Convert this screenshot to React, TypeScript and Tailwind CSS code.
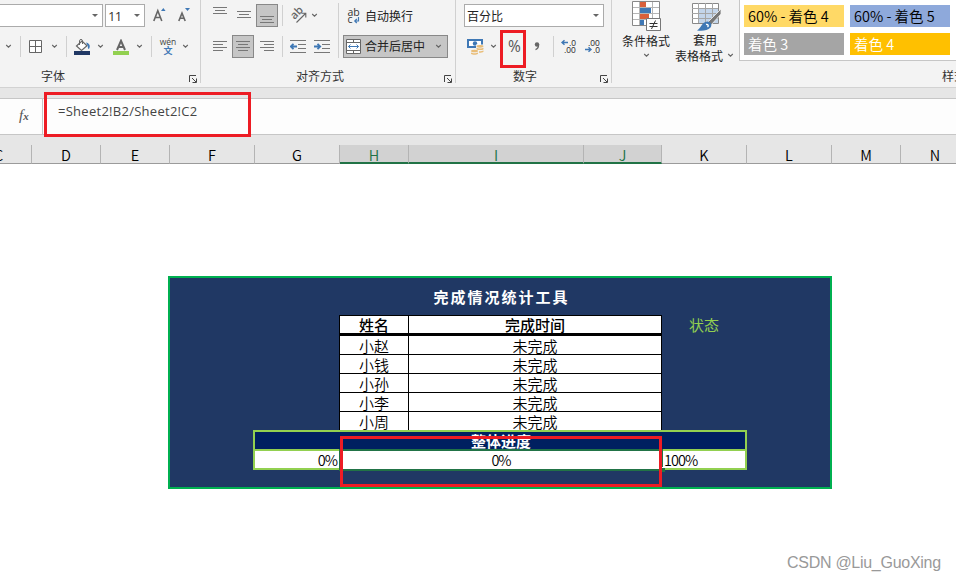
import type { ReactNode } from "react";

const Chevron = ({ className = "" }: { className?: string }) => (
  <svg className={`h-[5px] w-[7px] shrink-0 ${className}`} viewBox="0 0 7 5">
    <path d="M1.2 1L3.5 3.2L5.8 1" fill="none" stroke="#666" strokeWidth="1.1" />
  </svg>
);

const Triangle = ({ className = "" }: { className?: string }) => (
  <svg className={`h-[3px] w-[6px] shrink-0 ${className}`} viewBox="0 0 6 3">
    <path d="M0 0H6L3 3Z" fill="#666" />
  </svg>
);

const Sep = ({ className = "" }: { className?: string }) => (
  <div className={`w-px shrink-0 bg-[#d0d0d0] ${className}`} />
);

const Launcher = ({ className = "" }: { className?: string }) => (
  <svg className={`h-[8px] w-[8px] shrink-0 ${className}`} viewBox="0 0 8 8" fill="none" stroke="#444">
    <path d="M0.5 7V0.5H7M3 3L7 7M7.5 3.5V7.5H3.5" />
  </svg>
);

type Line = [number, number, number];
const Lines = ({ lines, className = "" }: { lines: Line[]; className?: string }) => (
  <svg className={`h-[21px] w-[20px] shrink-0 ${className}`} viewBox="0 0 20 21" stroke="#777" shapeRendering="crispEdges">
    {lines.map(([x1, x2, y]) => (
      <path key={y} d={`M${x1} ${y}.5H${x2}`} />
    ))}
  </svg>
);

const GroupLabel = ({ children, pad, launcher }: { children: ReactNode; pad: string; launcher: string }) => (
  <div className={`flex h-[25px] ${pad}`}>
    <span className="mt-[9px] whitespace-nowrap text-[12px] leading-[18px] text-[#333]">{children}</span>
    <Launcher className={`mt-[17px] ml-auto ${launcher}`} />
  </div>
);

const Indent = ({ right }: { right?: boolean }) => (
  <svg className="h-[14px] w-[16px] shrink-0" viewBox="0 0 16 14" fill="none">
    <path d="M0 0.5H16M8 4.5H16M8 8.5H16M0 12.5H16" stroke="#777" shapeRendering="crispEdges" />
    <path d={right ? "M0 6.5H6M3.5 3.8L6.2 6.5L3.5 9.2" : "M7 6.5H1M3.5 3.8L0.8 6.5L3.5 9.2"} stroke="#3f78b5" strokeWidth="1.8" />
  </svg>
);

const FontGroup = () => (
  <div className="flex w-[200px] shrink-0 flex-col">
    <div className="mt-[4px] flex h-[23px] shrink-0">
      <div className="flex w-[103px] items-center justify-end border border-l-0 border-[#ababab] bg-white pr-[4px]">
        <Triangle />
      </div>
      <div className="ml-[2px] flex w-[40px] items-center justify-between border border-[#ababab] bg-white pr-[4px] pl-[2px]">
        <span className="text-[13px] leading-[20px] tracking-[-0.8px] text-[#333] font-['Open_Sans',sans-serif]">11</span>
        <Triangle />
      </div>
      <svg className="mt-[3px] ml-[8px] h-[18px] w-[14px]" viewBox="0 0 14 18">
        <path d="M0.8 14L4.8 3.8L8.8 14M2.3 10.5H7.3" fill="none" stroke="#666" strokeWidth="1.6" />
        <path d="M8 4L10.3 1L12.6 4Z" fill="#3f78b5" />
      </svg>
      <svg className="mt-[3px] ml-[11px] h-[18px] w-[13px]" viewBox="0 0 13 18">
        <path d="M0.8 14L4 6.2L7.2 14M2 11.3H6" fill="none" stroke="#666" strokeWidth="1.6" />
        <path d="M7 1H12L9.5 4Z" fill="#3f78b5" />
      </svg>
    </div>
    <div className="mt-[8px] flex h-[23px] shrink-0 items-center pl-[5px]">
      <Chevron />
      <Sep className="ml-[8px] h-[21px]" />
      <svg className="ml-[8px] h-[13px] w-[13px]" viewBox="0 0 13 13">
        <path d="M0.5 0.5H12.5V12.5H0.5ZM6.5 0V13M0 6.5H13" fill="#fff" stroke="#666" />
      </svg>
      <Chevron className="ml-[9px]" />
      <Sep className="ml-[8px] h-[21px]" />
      <svg className="ml-[7px] h-[16px] w-[16px]" viewBox="0 0 16 16">
        <path d="M2.5 7L8 2L13 6.8L7.5 11.5Z" fill="#fff" stroke="#666" strokeWidth="1.2" />
        <path d="M5.5 6V1.8C5.5 0 8.5 0 8.5 1.8V5" fill="none" stroke="#666" />
        <path d="M12 3.5C16 4.5 16.5 7 15 10C14 10 13.8 9 13.8 7Z" fill="#3f78b5" />
        <path d="M0 12H16V16H0Z" fill="#203864" />
      </svg>
      <Chevron className="ml-[7px]" />
      <svg className="ml-[9px] h-[16px] w-[16px]" viewBox="0 0 16 16">
        <path d="M4 11L8 1.8L12 11M5.4 8H10.6" fill="none" stroke="#666" strokeWidth="2" />
        <path d="M0 12H16V16H0Z" fill="#92d050" />
      </svg>
      <Chevron className="ml-[7px]" />
      <Sep className="ml-[8px] h-[21px]" />
      <div className="-mt-px ml-[7px] flex w-[18px] flex-col items-center">
        <span className="text-[8.5px] leading-[8px] text-[#444] font-['Open_Sans',sans-serif]">wén</span>
        <span className="text-[9px] font-bold leading-[9px] text-[#3f78b5]">文</span>
      </div>
      <Chevron className="ml-[5px]" />
    </div>
    <GroupLabel pad="pl-[41px]" launcher="mr-[3px]">字体</GroupLabel>
  </div>
);

const AlignGroup = () => (
  <div className="flex w-[254px] shrink-0 flex-col">
    <div className="flex h-[58px] shrink-0">
      <div className="w-[137px] pl-[8px]">
        <div className="mt-[4px] flex h-[23px] items-center">
          <Lines className="ml-px" lines={[[3, 17, 2], [5, 15, 5], [3, 17, 8]]} />
          <Lines className="ml-[4px]" lines={[[3, 17, 6], [5, 15, 9], [3, 17, 12]]} />
          <div className="ml-[2px] flex h-[23px] w-[22px] items-center justify-center border border-[#888] bg-[#c6c6c6]">
            <Lines lines={[[3, 17, 11], [5, 15, 14], [3, 17, 17]]} />
          </div>
          <Sep className="ml-[4px] h-[21px]" />
          <svg className="ml-[7px] h-[17px] w-[17px] overflow-visible" viewBox="0 0 17 17">
            <text x="0" y="0" fontSize="11" fontWeight="600" fill="#666" fontFamily="Open Sans" transform="translate(4.5 13) rotate(-45)">ab</text>
            <path d="M6.5 15.5L15.5 6.5M11.5 6.2H15.8V10.5" fill="none" stroke="#666" strokeWidth="1.1" />
          </svg>
          <Chevron className="ml-[4px]" />
        </div>
        <div className="mt-[8px] flex h-[23px] items-center">
          <Lines className="ml-px" lines={[[3, 17, 5], [3, 13, 8], [3, 17, 11], [3, 13, 14]]} />
          <div className="ml-[2px] flex h-[23px] w-[22px] items-center justify-center border border-[#888] bg-[#c6c6c6]">
            <Lines lines={[[3, 17, 5], [5, 15, 8], [3, 17, 11], [5, 15, 14]]} />
          </div>
          <Lines className="ml-[2px]" lines={[[4, 18, 5], [8, 18, 8], [4, 18, 11], [8, 18, 14]]} />
          <Sep className="ml-[6px] h-[21px]" />
          <div className="ml-[7px] flex gap-[8px]">
            <Indent />
            <Indent right />
          </div>
        </div>
      </div>
      <Sep className="mt-[3px] h-[55px]" />
      <div className="pl-[4px]">
        <div className="mt-[4px] flex h-[23px] items-center pl-[4px]">
          <svg className="h-[18px] w-[14px] overflow-visible" viewBox="0 0 14 18">
            <text x="0.5" y="8.5" fontSize="10.5" fill="#333" fontFamily="Open Sans">ab</text>
            <text x="0.5" y="16" fontSize="10.5" fill="#333" fontFamily="Open Sans">c</text>
            <path d="M11.5 10V14H8M9.8 12L7.8 14L9.8 16" fill="none" stroke="#3f78b5" strokeWidth="1.2" />
          </svg>
          <span className="ml-[4px] whitespace-nowrap text-[12px] leading-[18px] text-[#222]">自动换行</span>
        </div>
        <div className="mt-[8px] flex h-[23px] w-[105px] items-center border border-[#888] bg-[#c6c6c6] pl-[2px]">
          <svg className="h-[15px] w-[15px]" viewBox="0 0 15 15">
            <path d="M0.5 0.5H14.5V14.5H0.5ZM0.5 3.5H14.5M0.5 11.5H14.5M7.5 0.5V3.5M7.5 11.5V14.5" fill="#fff" stroke="#666" />
            <path d="M2.5 7.5H12.5M4.5 5.5L2.5 7.5L4.5 9.5M10.5 5.5L12.5 7.5L10.5 9.5" fill="none" stroke="#3f78b5" />
          </svg>
          <span className="-mt-px ml-[4px] whitespace-nowrap text-[12px] leading-[18px] text-[#222]">合并后居中</span>
          <Chevron className="ml-[10px]" />
        </div>
      </div>
    </div>
    <GroupLabel pad="pl-[95px]" launcher="mr-[3px]">对齐方式</GroupLabel>
  </div>
);

const NumberGroup = () => (
  <div className="flex w-[155px] shrink-0 flex-col">
    <div className="mt-[4px] ml-[8px] flex h-[23px] w-[140px] shrink-0 items-center justify-between border border-[#ababab] bg-white pr-[4px] pl-[2px]">
      <span className="text-[12px] leading-[18px] text-[#222]">百分比</span>
      <Triangle />
    </div>
    <div className="mt-[8px] flex h-[23px] shrink-0 items-center pl-[11px]">
      <svg className="h-[16px] w-[17px]" viewBox="0 0 17 16">
        <path d="M0 0H16V9H0Z" fill="#3f78b5" />
        <path d="M2 2H14V7H2Z" fill="#fff" />
        <circle cx="8" cy="4.5" r="2.2" fill="#3f78b5" />
        <path d="M9 5.5H17V14H11.5V16H3.5V10.5H9Z" fill="#f3f3f3" />
        <g fill="#e9bd78">
          <ellipse cx="13" cy="7.3" rx="3.5" ry="1.4" />
          <path d="M9.5 8.8C11 9.8 15 9.8 16.5 8.8V10.2C15 11.4 11 11.4 9.5 10.2Z" />
          <path d="M12 12.2C13.5 12.4 15.5 12 16.5 11.4V12.7C15.5 13.6 13.5 13.9 12 13.8Z" />
          <ellipse cx="7.5" cy="12" rx="3.5" ry="1.3" />
          <path d="M4 13.6C5.5 14.5 9.5 14.5 11 13.6V14.8C9.5 16.1 5.5 16.1 4 14.8Z" />
        </g>
      </svg>
      <Chevron className="ml-[6px]" />
      <span className="-mt-px ml-[10px] w-[15px] text-center text-[15.5px] leading-[20px] text-[#555] font-['Open_Sans',sans-serif]">%</span>
      <svg className="ml-[12px] h-[9px] w-[7px]" viewBox="0 0 7 9">
        <circle cx="3" cy="2.5" r="2.2" fill="#666" />
        <path d="M4.4 2.2C4.8 5 3.5 7 1.5 7.7" fill="none" stroke="#666" strokeWidth="1.4" />
      </svg>
      <Sep className="ml-[12px] h-[21px]" />
      <svg className="ml-[7px] h-[16px] w-[16px] overflow-visible" viewBox="0 0 16 16">
        <text x="8" y="7" fontSize="8.5" fill="#333" fontFamily="Liberation Sans">.0</text>
        <text x="3" y="14" fontSize="8.5" fill="#333" fontFamily="Liberation Sans">.00</text>
        <path d="M7 3.5H1M3.5 1.2L1 3.5L3.5 5.8" fill="none" stroke="#3f78b5" strokeWidth="1.4" />
      </svg>
      <svg className="ml-[8px] h-[16px] w-[16px] overflow-visible" viewBox="0 0 16 16">
        <text x="3" y="7" fontSize="8.5" fill="#333" fontFamily="Liberation Sans">.00</text>
        <text x="8" y="14" fontSize="8.5" fill="#333" fontFamily="Liberation Sans">.0</text>
        <path d="M0 10.5H6M3.5 8.2L6 10.5L3.5 12.8" fill="none" stroke="#3f78b5" strokeWidth="1.4" />
      </svg>
    </div>
    <GroupLabel pad="pl-[57px]" launcher="mr-[3px]">数字</GroupLabel>
  </div>
);

const STYLE_CELLS = [
  { label: "60% - 着色 4", cls: "bg-[#ffd966] text-black" },
  { label: "60% - 着色 5", cls: "bg-[#8ea9db] text-black" },
  { label: "着色 3", cls: "bg-[#a5a5a5] text-white" },
  { label: "着色 4", cls: "bg-[#ffc000] text-white" },
];

const StylesGroup = () => (
  <div className="flex min-w-0 flex-1 overflow-hidden">
    <div className="flex w-[63px] flex-col items-center pl-[5px]">
      <svg className="mt-px h-[31px] w-[30px] shrink-0" viewBox="0 0 30 31">
        <path d="M1.5 0.5H28.5V24.5H1.5Z" fill="#fff" />
        <path d="M8.5 0V25M21.5 0V25M1 6.5H29M1 12.5H29M1 18.5H29" stroke="#b5b5b5" />
        <path d="M1.5 0.5H28.5V24.5H1.5Z" fill="none" stroke="#888" />
        <path d="M9 1H15V6H9ZM9 13H18V18H9Z" fill="#d9603b" />
        <path d="M9 7H20V12H9ZM9 19H13V24H9Z" fill="#3f78b5" />
        <path d="M15.5 17.5H29.5V29.5H15.5Z" fill="#fff" stroke="#777" />
        <path d="M18.5 22.5H26.5M18.5 25.5H26.5M24.5 19.5L20.5 28" stroke="#333" fill="none" />
      </svg>
      <span className="whitespace-nowrap text-[12px] leading-[17px] text-[#222]">条件格式</span>
      <Chevron className="mt-[4px]" />
    </div>
    <div className="w-[64px] shrink-0">
      <svg className="mt-[3px] ml-[17px] h-[29px] w-[30px]" viewBox="0 0 30 29">
        <path d="M0.5 0.5H26.5V20.5H0.5Z" fill="#fff" stroke="#888" />
        <path d="M7 5H26V20H7Z" fill="#c3d5ea" />
        <path d="M6.5 0V20M13.5 0V20M20.5 0V20M0 5.5H26M0 10.5H26M0 15.5H26" stroke="#a5a5a5" />
        <path d="M29 6V11L19 22L16 19Z" fill="#777" stroke="#f3f3f3" strokeWidth="0.8" />
        <path d="M15.5 18.5C19 19 20.5 21.5 18.5 24.5C15.5 28 10 28 5 27.5C9 25.5 9.5 19 15.5 18.5Z" fill="#3f78b5" />
        <path d="M14 21.5C16 21 17 23 15.5 24" fill="none" stroke="#fff" strokeWidth="1.4" />
      </svg>
      <div className="flex flex-col text-[12px] leading-[15px] text-[#222]">
        <span className="pl-[18px]">套用</span>
        <span className="mt-px flex items-center whitespace-nowrap">
          表格格式
          <Chevron className="ml-[4px]" />
        </span>
      </div>
    </div>
    <div className="min-w-0 flex-1">
      <div className="h-[61px] border-b border-l border-[#c6c6c6] bg-white pt-[5px] pl-[4px]">
        <div className="grid grid-cols-[100px_100px] gap-[6px]">
          {STYLE_CELLS.map((c) => (
            <div key={c.label} className={`h-[22px] pl-[4px] text-[14.5px] font-[350] leading-[21px] whitespace-nowrap ${c.cls}`}>
              {c.label}
            </div>
          ))}
        </div>
      </div>
      <div className="mt-[6px] ml-[203px] w-[30px] text-[12px] leading-[18px] text-[#333]">样式</div>
    </div>
  </div>
);

const COLUMNS = [
  { n: "C", w: "w-[32px]" },
  { n: "D", w: "w-[69px]" },
  { n: "E", w: "w-[69px]" },
  { n: "F", w: "w-[85px]" },
  { n: "G", w: "w-[85px]" },
  { n: "H", w: "w-[69px]", on: true },
  { n: "I", w: "w-[175px]", on: true },
  { n: "J", w: "w-[78px]", on: true },
  { n: "K", w: "w-[85px]" },
  { n: "L", w: "w-[85px]" },
  { n: "M", w: "w-[69px]" },
  { n: "N", w: "w-[69px]" },
];

const ColumnHeader = () => (
  <div className="flex h-[29px] items-end overflow-hidden bg-[#e6e6e6]">
    {COLUMNS.map((c) => (
      <div
        key={c.n}
        className={`flex h-[19px] shrink-0 justify-center border-r border-r-[#b4b4b4] text-[14.5px] font-[350] leading-[20px] ${c.w} ${
          c.on ? "border-b-2 border-b-[#217346] bg-[#d2d2d2] text-[#217346]" : "border-b border-b-[#9b9b9b] text-black"
        }`}
      >
        <span className={c.n === "C" ? "-ml-[34px]" : ""}>{c.n}</span>
      </div>
    ))}
  </div>
);

const NAMES = ["小赵", "小钱", "小孙", "小李", "小周"];

const Sheet = () => (
  <div className="flex-1 bg-white pt-[112px] pl-[168px]">
    <div className="flex h-[213px] w-[664px] flex-col border-2 border-[#00b050] bg-[#203864] text-[15px] text-black">
      <div className="h-[37px] shrink-0 pl-[3px] text-center text-[15px] font-bold leading-[37px] tracking-[2px] text-white">
        完成情况统计工具
      </div>
      <div className="flex h-[115px] shrink-0">
        <div className="ml-[169px] w-[323px] border-x border-t border-black bg-white text-center">
          <div className="flex h-[20px] border-b-3 border-black font-medium leading-[17px]">
            <span className="w-[69px] border-r border-black">姓名</span>
            <span className="flex-1">完成时间</span>
          </div>
          {NAMES.map((n) => (
            <div key={n} className="flex h-[19px] border-b border-black font-[350] leading-[19px]">
              <span className="w-[69px] border-r border-black">{n}</span>
              <span className="flex-1">未完成</span>
            </div>
          ))}
        </div>
        <div className="w-[85px] pr-px text-center leading-[19px] text-[#92d050]">状态</div>
      </div>
      <div className="ml-[83px] h-[40px] w-[494px] shrink-0 border-2 border-[#92d050]">
        <div className="h-[17px] bg-[#002060] pl-[2px] text-center font-bold leading-[17px] text-white">整体进度</div>
        <div className="flex h-[19px] bg-white text-[14.5px] font-[350] tracking-[-1px]">
          <div className="w-[84px] border-t-2 border-[#92d050] pr-[2px] text-right leading-[18px]">0%</div>
          <div className="relative -mb-[3px] h-[22px] w-[324px] border-2 border-[#217346] bg-white text-center leading-[18px]">
            0%
            <div className="absolute -right-[4px] -bottom-[3px] h-[5px] w-[6px] border-t border-l border-white bg-[#217346]" />
          </div>
          <div className="flex-1 border-t-2 border-[#92d050] pl-px leading-[18px]">100%</div>
        </div>
      </div>
    </div>
  </div>
);

export default function App() {
  return (
    <div className="relative flex h-[582px] w-[956px] flex-col overflow-hidden bg-[#e6e6e6] font-['Noto_Sans_CJK_SC',sans-serif]">
      <div className="flex h-[88px] shrink-0 border-b border-[#d2d2d2] bg-[#f3f3f3]">
        <FontGroup />
        <Sep className="h-[83px] bg-[#b9b9b9]" />
        <AlignGroup />
        <Sep className="h-[83px] bg-[#b9b9b9]" />
        <NumberGroup />
        <Sep className="h-[83px] bg-[#b9b9b9]" />
        <StylesGroup />
      </div>
      <div className="mt-[10px] flex h-[37px] shrink-0 border-y border-[#c6c6c6] bg-[#fdfdfd]">
        <div className="w-[43px] border-r border-[#c6c6c6] pt-[6px] pl-[19px] text-[15px] italic leading-[20px] text-[#555] font-['Liberation_Serif',serif]">
          <span>f</span>
          <span className="text-[11px] font-bold">x</span>
        </div>
        <span className="pt-[2px] pl-[15px] text-[13px] leading-[20px] tracking-[0.27px] text-[#444] font-['Open_Sans',sans-serif]">=Sheet2!B2/Sheet2!C2</span>
      </div>
      <ColumnHeader />
      <Sheet />
      <div className="absolute top-[30px] left-[500px] h-[38px] w-[26px] border-3 border-[#ed1c24]" />
      <div className="absolute top-[92px] left-[44px] h-[45px] w-[207px] border-3 border-[#ed1c24]" />
      <div className="absolute top-[436px] left-[340px] h-[51px] w-[322px] border-3 border-[#ed1c24]" />
      <div className="absolute top-[552px] left-[787px] whitespace-nowrap text-[16px] leading-[22px] tracking-[-0.28px] text-[#999] font-['Liberation_Sans',sans-serif]">
        CSDN @Liu_GuoXing
      </div>
    </div>
  );
}
